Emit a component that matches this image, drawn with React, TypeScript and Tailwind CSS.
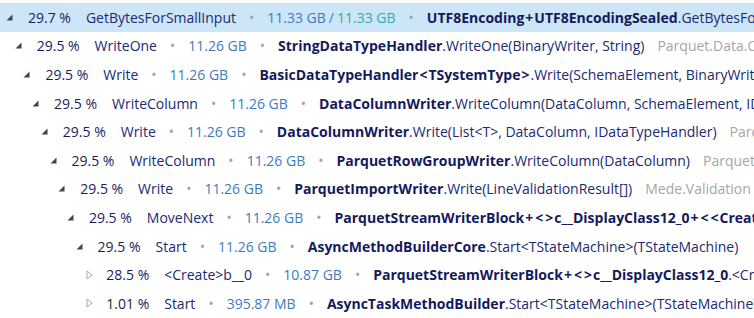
import React from 'react';

type Row = {
  depth: number;
  open: boolean;
  pct: string;
  name: string;
  size: string;
  size2?: string;
  cls: string;
  method: string;
  ns?: string;
  selected?: boolean;
};

const rows: Row[] = [
  { depth: 0, open: true, pct: '29.7 %', name: 'GetBytesForSmallInput', size: '11.33 GB', size2: '11.33 GB', cls: 'UTF8Encoding+UTF8EncodingSealed', method: '.GetBytesForSmallInput(Char*, Int32, Byte*, Int32, Int32&)', selected: true },
  { depth: 1, open: true, pct: '29.5 %', name: 'WriteOne', size: '11.26 GB', cls: 'StringDataTypeHandler', method: '.WriteOne(BinaryWriter, String)', ns: 'Parquet.Data.Concrete' },
  { depth: 2, open: true, pct: '29.5 %', name: 'Write', size: '11.26 GB', cls: 'BasicDataTypeHandler<TSystemType>', method: '.Write(SchemaElement, BinaryWriter, IList)', ns: 'Parquet.Data' },
  { depth: 3, open: true, pct: '29.5 %', name: 'WriteColumn', size: '11.26 GB', cls: 'DataColumnWriter', method: '.WriteColumn(DataColumn, SchemaElement, IDataTypeHandler)', ns: 'Parquet.File' },
  { depth: 4, open: true, pct: '29.5 %', name: 'Write', size: '11.26 GB', cls: 'DataColumnWriter', method: '.Write(List<T>, DataColumn, IDataTypeHandler)', ns: 'Parquet.File' },
  { depth: 5, open: true, pct: '29.5 %', name: 'WriteColumn', size: '11.26 GB', cls: 'ParquetRowGroupWriter', method: '.WriteColumn(DataColumn)', ns: 'Parquet' },
  { depth: 6, open: true, pct: '29.5 %', name: 'Write', size: '11.26 GB', cls: 'ParquetImportWriter', method: '.Write(LineValidationResult[])', ns: 'Mede.Validation' },
  { depth: 7, open: true, pct: '29.5 %', name: 'MoveNext', size: '11.26 GB', cls: 'ParquetStreamWriterBlock+<>c__DisplayClass12_0+<<CreateBlock>b__0>d', method: '.MoveNext()' },
  { depth: 8, open: true, pct: '29.5 %', name: 'Start', size: '11.26 GB', cls: 'AsyncMethodBuilderCore', method: '.Start<TStateMachine>(TStateMachine)' },
  { depth: 9, open: false, pct: '28.5 %', name: '<Create>b__0', size: '10.87 GB', cls: 'ParquetStreamWriterBlock+<>c__DisplayClass12_0', method: '.<Create>b__0()' },
  { depth: 9, open: false, pct: '1.01 %', name: 'Start', size: '395.87 MB', cls: 'AsyncTaskMethodBuilder', method: '.Start<TStateMachine>(TStateMachine)' },
];

const Dot = () => <span className="mx-[13px] text-[#a3a3a3]">•</span>;

// bold type names: the + < > glyphs get a little air, like the original
const TypeName = ({ text }: { text: string }) => (
  <span className="font-bold text-[#141a5c]">
    {text.split(/([+<>])/).map((p, i) =>
      /^[+<>]$/.test(p) ? (
        <span key={i} className="mx-[1px]">{p}</span>
      ) : (
        <React.Fragment key={i}>{p}</React.Fragment>
      )
    )}
  </span>
);

const Toggle = ({ open }: { open: boolean }) =>
  open ? (
    <svg width="7" height="7" viewBox="0 0 7 7" className="shrink-0">
      <path d="M6.5 0.5 L6.5 6.5 L0.5 6.5 Z" fill="#444444" />
    </svg>
  ) : (
    <svg width="7" height="10" viewBox="0 0 7 10" className="shrink-0 ml-[2px] mr-[-2px]">
      <path d="M1 1 L6 5 L1 9 Z" fill="none" stroke="#a8a8a8" strokeWidth="1" />
    </svg>
  );

export default function App() {
  return (
    <div className="w-[754px] h-[318px] overflow-hidden bg-white pt-[3px] font-['Open_Sans',sans-serif] text-[14px]">
      {rows.map((r, i) => (
        <div
          key={i}
          className={`flex items-center h-[28.6px] whitespace-nowrap ${r.selected ? 'bg-[#cde6f7]' : ''}`}
          style={{ paddingLeft: 6 + r.depth * 8.7 }}
        >
          <Toggle open={r.open} />
          <span className="ml-[15px] text-[#1b1d5e]">{r.pct}</span>
          <span className="ml-[15px] text-[#202a72]">{r.name}</span>
          <Dot />
          <span className="text-[#3d7cbc]">{r.size}</span>
          {r.size2 && (
            <>
              <span className="text-[#3d7cbc] mx-[3px]">/</span>
              <span className="text-[#2eb0a6]">{r.size2}</span>
            </>
          )}
          <Dot />
          <TypeName text={r.cls} />
          <span className="text-[#202a72]">{r.method}</span>
          {r.ns && <span className="ml-[13px] text-[#a6a6a6]">{r.ns}</span>}
        </div>
      ))}
    </div>
  );
}
